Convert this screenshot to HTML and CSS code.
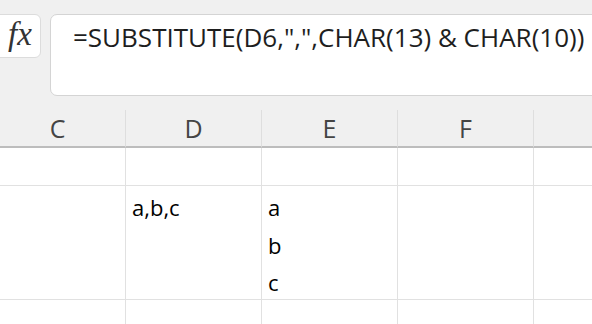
FILE: index.html
```html
<!DOCTYPE html>
<html lang="en">
<head>
    <meta charset="UTF-8">
    <title>Formula bar</title>
    <link rel="stylesheet" href="styles.css">
</head>
<body>
    <div class="sheet">
        <div class="formula-area">
            <div class="fx-box"><span class="fx">fx</span></div>
            <div class="formula-box">=SUBSTITUTE(D6,",",CHAR(13) &amp; CHAR(10))</div>
        </div>

        <div class="grid">
            <div class="head">C</div>
            <div class="head">D</div>
            <div class="head">E</div>
            <div class="head">F</div>
            <div class="head"></div>

            <div class="cell"></div>
            <div class="cell"></div>
            <div class="cell"></div>
            <div class="cell"></div>
            <div class="cell"></div>

            <div class="cell"></div>
            <div class="cell">a,b,c</div>
            <div class="cell">a<br>b<br>c</div>
            <div class="cell"></div>
            <div class="cell"></div>

            <div class="cell"></div>
            <div class="cell"></div>
            <div class="cell"></div>
            <div class="cell"></div>
            <div class="cell"></div>
        </div>
    </div>
</body>
</html>
```

FILE: styles.css
```css
body {
    margin: 0;
    background-color: #fff;
    font-family: "Open Sans", sans-serif;
    overflow: hidden;
}

.sheet {
    width: 592px;
    height: 324px;
    overflow: hidden;
}

.formula-area {
    display: flex;
    align-items: flex-start;
    gap: 9px;
    background-color: #f0f0f0;
    padding-top: 14px;
    height: 110px;
    box-sizing: border-box;
}

.fx-box {
    width: 52px;
    height: 44px;
    margin-left: -11px;
    box-sizing: border-box;
    background: #fff;
    border: 1px solid #dcdcdc;
    border-radius: 6px;
    display: flex;
    align-items: center;
    justify-content: center;
    padding-left: 10px;
}

.fx {
    font-family: "Liberation Serif", serif;
    font-style: italic;
    font-size: 33px;
    line-height: 1;
    color: #333;
    margin-top: -4px;
}

.formula-box {
    flex: 1;
    margin-right: -20px;
    height: 82px;
    box-sizing: border-box;
    background: #fff;
    border: 1px solid #d4d4d4;
    border-radius: 7px;
    padding: 4px 0 0 22px;
    font-size: 26px;
    line-height: 36px;
    color: #1e1e1e;
    white-space: nowrap;
}

.grid {
    display: grid;
    grid-template-columns: 136px 136px 136px 136px 136px;
    grid-template-rows: 38px 38px 114px 40px;
    margin-left: -10px;
}

.head {
    background-color: #f0f0f0;
    border-right: 1px solid #dedede;
    border-bottom: 2px solid #bdbdbd;
    text-align: center;
    font-size: 25px;
    line-height: 36px;
    color: #444;
    box-sizing: border-box;
}

.cell {
    border-right: 1px solid #e1e1e1;
    border-bottom: 1px solid #e1e1e1;
    box-sizing: border-box;
    font-size: 22px;
    color: #000;
    padding: 3px 0 0 6px;
    line-height: 37.5px;
}
```
